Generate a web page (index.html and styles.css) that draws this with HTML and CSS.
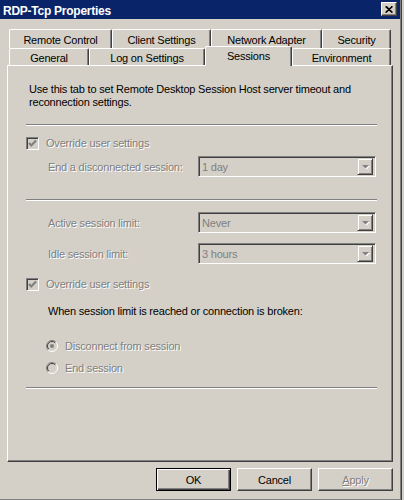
FILE: index.html
```html
<!DOCTYPE html>
<html>
<head>
<meta charset="utf-8">
<title>RDP-Tcp Properties</title>
<link rel="stylesheet" href="styles.css">
</head>
<body>
<div class="window">
  <div class="titlebar">
    <span class="title">RDP-Tcp Properties</span>
    <div class="close">
      <svg width="8" height="7" viewBox="0 0 8 7"><path d="M0.5 0.5 L7 6.5 M1.5 0.5 L7.5 6.5 M7 0.5 L0.5 6.5 M7.5 0.5 L1 6.5" stroke="#000" stroke-width="1.1" fill="none"/></svg>
    </div>
  </div>
  <div class="client">
    <div class="tabs">
      <div class="tabrow back">
        <div class="tab t-remote">Remote Control</div>
        <div class="tab t-client">Client Settings</div>
        <div class="tab t-network">Network Adapter</div>
        <div class="tab t-security">Security</div>
      </div>
      <div class="tabrow front">
        <div class="tab t-general">General</div>
        <div class="tab t-logon">Log on Settings</div>
        <div class="tab t-sessions selected">Sessions</div>
        <div class="tab t-env">Environment</div>
      </div>
    </div>
    <div class="panel">
      <p class="desc">Use this tab to set Remote Desktop Session Host server timeout and reconnection settings.</p>
      <div class="sep sep1"></div>
      <div class="check check1">
        <span class="checkbox"><svg width="9" height="9" viewBox="0 0 9 9"><polyline points="1,4 3.3,6.5 8,1.6" stroke="#808080" stroke-width="2.2" fill="none"/></svg></span>
        <span class="dis">Override user settings</span>
      </div>
      <div class="field field1">
        <span class="flabel dis">End a disconnected session:</span>
        <div class="combo">
          <span class="cvalue">1 day</span>
          <span class="cbtn"><svg width="9" height="6" viewBox="0 0 9 6"><polygon points="2,2 9,2 5.5,5.5" fill="#fff"/><polygon points="1,1 8,1 4.5,4.5" fill="#808080"/></svg></span>
        </div>
      </div>
      <div class="sep sep2"></div>
      <div class="field field2">
        <span class="flabel dis">Active session limit:</span>
        <div class="combo">
          <span class="cvalue">Never</span>
          <span class="cbtn"><svg width="9" height="6" viewBox="0 0 9 6"><polygon points="2,2 9,2 5.5,5.5" fill="#fff"/><polygon points="1,1 8,1 4.5,4.5" fill="#808080"/></svg></span>
        </div>
      </div>
      <div class="field field3">
        <span class="flabel dis">Idle session limit:</span>
        <div class="combo">
          <span class="cvalue">3 hours</span>
          <span class="cbtn"><svg width="9" height="6" viewBox="0 0 9 6"><polygon points="2,2 9,2 5.5,5.5" fill="#fff"/><polygon points="1,1 8,1 4.5,4.5" fill="#808080"/></svg></span>
        </div>
      </div>
      <div class="check check2">
        <span class="checkbox"><svg width="9" height="9" viewBox="0 0 9 9"><polyline points="1,4 3.3,6.5 8,1.6" stroke="#808080" stroke-width="2.2" fill="none"/></svg></span>
        <span class="dis">Override user settings</span>
      </div>
      <p class="when">When session limit is reached or connection is broken:</p>
      <div class="radio radio1">
        <svg class="rbox" width="12" height="12" viewBox="0 0 12 12">
          <circle cx="6" cy="6" r="5" fill="#d4d0c8"/>
          <path d="M2.1 9.9 A5.5 5.5 0 0 1 9.9 2.1" stroke="#808080" fill="none"/>
          <path d="M9.9 2.1 A5.5 5.5 0 0 1 2.1 9.9" stroke="#fff" fill="none"/>
          <path d="M2.8 9.2 A4.5 4.5 0 0 1 9.2 2.8" stroke="#404040" fill="none"/>
          <circle cx="6" cy="6" r="2" fill="#808080"/>
        </svg>
        <span class="dis">Disconnect from session</span>
      </div>
      <div class="radio radio2">
        <svg class="rbox" width="12" height="12" viewBox="0 0 12 12">
          <circle cx="6" cy="6" r="5" fill="#d4d0c8"/>
          <path d="M2.1 9.9 A5.5 5.5 0 0 1 9.9 2.1" stroke="#808080" fill="none"/>
          <path d="M9.9 2.1 A5.5 5.5 0 0 1 2.1 9.9" stroke="#fff" fill="none"/>
          <path d="M2.8 9.2 A4.5 4.5 0 0 1 9.2 2.8" stroke="#404040" fill="none"/>
        </svg>
        <span class="dis">End session</span>
      </div>
      <div class="sep sep3"></div>
    </div>
    <div class="buttons">
      <div class="btn default">OK</div>
      <div class="btn">Cancel</div>
      <div class="btn disabled"><u>A</u>pply</div>
    </div>
  </div>
</div>
</body>
</html>
```
FILE: styles.css
```css
* { box-sizing: border-box; }
body {
  margin: 0;
  background: #d4d0c8;
  font-family: "Liberation Sans", Arial, sans-serif;
  font-size: 11px;
  letter-spacing: -0.2px;
  color: #000;
}
.window {
  width: 402px;
  height: 500px;
  display: flex;
  flex-direction: column;
  border-right: 1px solid #404040;
  box-shadow: inset -1px -1px 0 #808080;
}
.titlebar {
  height: 19px;
  margin-right: 1px;
  background: #0a246a;
  display: flex;
  justify-content: space-between;
  align-items: flex-start;
  padding: 0 3px 0 3px;
}
.title {
  color: #fff;
  font-weight: bold;
  font-size: 12px;
  letter-spacing: -0.25px;
  line-height: 16px;
  padding-top: 3px;
}
.close {
  width: 16px;
  height: 14px;
  margin-top: 2px;
  background: #d4d0c8;
  border: 1px solid;
  border-color: #fff #404040 #404040 #fff;
  box-shadow: inset -1px -1px 0 #808080;
  display: flex;
  align-items: center;
  justify-content: center;
}
.client {
  padding: 10px 0 0 7px;
  display: flex;
  flex-direction: column;
}
.tabs {
  margin-left: 2px;
  width: 382px;
}
.tabrow { display: flex; }
.tabrow.back { height: 19px; }
.tabrow.front { height: 17px; align-items: flex-end; }
.tab {
  height: 100%;
  text-align: center;
  line-height: 13px;
  padding-top: 3px;
  white-space: nowrap;
  background: #d4d0c8;
  border-top: 1px solid #fff;
  border-left: 1px solid #fff;
  border-right: 1px solid #404040;
  border-radius: 2px 2px 0 0;
  box-shadow: inset -1px 0 0 #808080;
}
.tabrow.back .tab { padding-top: 4px; }
.t-remote { width: 103px; }
.t-client { width: 99px; }
.t-network { width: 111px; }
.t-security { width: 69px; }
.t-general { width: 80px; }
.t-logon { width: 116px; }
.t-sessions { width: 87px; }
.t-env { width: 99px; }
.tab.selected {
  position: relative;
  z-index: 1;
  height: 20px;
  margin-bottom: -1px;
}
.panel {
  width: 386px;
  height: 397px;
  border-style: solid;
  border-width: 1px 1px 1px 1px;
  border-color: #fff #404040 #404040 #fff;
  box-shadow: inset -1px -1px 0 #808080;
  padding: 17px 15px 0 18px;
  display: flex;
  flex-direction: column;
}
.desc {
  margin: 0;
  padding-left: 3px;
  line-height: 13px;
}
.sep {
  height: 2px;
  border-top: 1px solid #808080;
  border-bottom: 1px solid #fff;
}
.sep1 { margin-top: 15px; }
.sep2 { margin-top: 22px; }
.sep3 { margin-top: 13px; }
.dis {
  color: #808080;
  text-shadow: 1px 1px 0 #fff;
}
.check {
  display: flex;
  align-items: center;
  gap: 7px;
  height: 13px;
  line-height: 13px;
}
.check1 { margin-top: 11px; }
.check2 { margin-top: 14px; }
.checkbox {
  width: 13px;
  height: 13px;
  flex: none;
  border: 1px solid;
  border-color: #808080 #fff #fff #808080;
  box-shadow: inset 1px 1px 0 #404040, inset -1px -1px 0 #d4d0c8;
  background: #d4d0c8;
  display: flex;
  align-items: center;
  justify-content: center;
}
.field {
  display: flex;
  align-items: center;
  padding-left: 22px;
}
.field1 { margin-top: 6px; }
.field2 { margin-top: 11px; }
.field3 { margin-top: 10px; }
.flabel { width: 150px; }
.combo {
  width: 178px;
  height: 21px;
  border: 1px solid;
  border-color: #808080 #fff #fff #808080;
  box-shadow: inset 1px 1px 0 #404040, inset -1px -1px 0 #d4d0c8;
  padding: 2px;
  display: flex;
  align-items: center;
}
.cvalue {
  flex: 1;
  color: #808080;
  padding-left: 1px;
}
.cbtn {
  width: 16px;
  height: 17px;
  border: 1px solid;
  border-color: #d4d0c8 #404040 #404040 #d4d0c8;
  box-shadow: inset 1px 1px 0 #fff, inset -1px -1px 0 #808080;
  display: flex;
  align-items: center;
  justify-content: center;
}
.when {
  margin: 14px 0 0 0;
  padding-left: 22px;
  line-height: 13px;
}
.radio {
  display: flex;
  align-items: center;
  gap: 7px;
  height: 13px;
  padding-left: 20px;
}
.rbox { flex: none; }
.radio1 { margin-top: 21px; }
.radio2 { margin-top: 9px; }
.buttons {
  width: 386px;
  margin-top: 6px;
  display: flex;
  justify-content: flex-end;
  gap: 6px;
}
.btn {
  width: 75px;
  height: 23px;
  display: flex;
  align-items: center;
  justify-content: center;
  background: #d4d0c8;
  border: 1px solid;
  border-color: #fff #404040 #404040 #fff;
  box-shadow: inset -1px -1px 0 #808080;
}
.btn.default {
  border-color: #000;
  box-shadow: inset 1px 1px 0 #fff, inset -1px -1px 0 #404040, inset -2px -2px 0 #808080;
}
.btn.disabled {
  color: #808080;
  text-shadow: 1px 1px 0 #fff;
}
```
